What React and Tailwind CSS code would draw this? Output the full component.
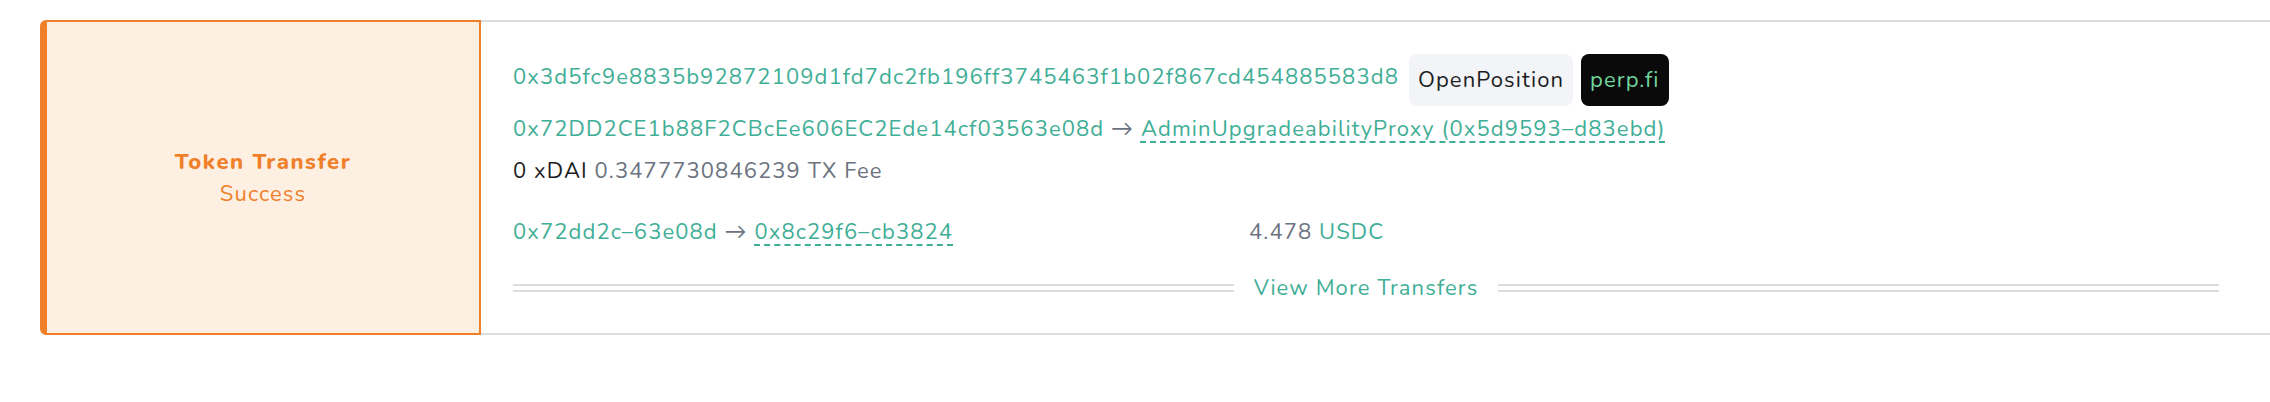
import React from 'react';

const font = { fontFamily: 'Nunito, Lato, "Open Sans", sans-serif' };

const DoubleLine = () => (
  <div className="flex-1 flex flex-col gap-[4px]">
    <div className="h-[2px] bg-[#dadde1]"></div>
    <div className="h-[2px] bg-[#dadde1]"></div>
  </div>
);

export default function App() {
  return (
    <div className="min-h-screen bg-white pt-[20px] pl-[40px] text-[22px] tracking-[0.05em]" style={font}>
      <div className="flex h-[315px]">
        {/* type + status */}
        <div className="w-[441px] shrink-0 flex flex-col items-center justify-center bg-[#fdf0e2] border-l-[7px] border-y-2 border-r-2 border-[#f07f2a] rounded-l-[6px] text-[#f07f2a] leading-[32px]">
          <span className="font-extrabold tracking-[0.07em]">Token Transfer</span>
          <span>Success</span>
        </div>

        {/* details */}
        <div className="flex-1 border-y-2 border-[#dadde1] pl-[32px] pr-[51px] pt-[32px]">
          <div className="flex items-center h-[52px]">
            <a className="text-[#3fae96] mr-[10px] mb-[5px]">0x3d5fc9e8835b92872109d1fd7dc2fb196ff3745463f1b02f867cd454885583d8</a>
            <span className="h-[52px] flex items-center px-[9px] rounded-[8px] bg-[#f3f4f8] text-[#1d1d1f] mr-[8px]">OpenPosition</span>
            <span className="h-[52px] flex items-center px-[9px] rounded-[8px] bg-[#0a0a0a] text-[#72d69d]">perp.fi</span>
          </div>

          <div className="mt-[8px] leading-[30px] text-[#3fae96]">
            0x72DD2CE1b88F2CBcEe606EC2Ede14cf03563e08d{' '}
            <span className="text-[#6b7280]">→</span>{' '}
            <a className="underline decoration-dashed decoration-[2px] underline-offset-[5px]">AdminUpgradeabilityProxy (0x5d9593–d83ebd)</a>
          </div>

          <div className="mt-[12px] leading-[30px]">
            <span className="text-[#1d1d1f]">0 xDAI</span>{' '}
            <span className="text-[#6b7280]">0.3477730846239 TX Fee</span>
          </div>

          <div className="mt-[31px] leading-[30px] flex">
            <div className="w-[736px] shrink-0 text-[#3fae96]">
              0x72dd2c–63e08d <span className="text-[#6b7280]">→</span>{' '}
              <a className="underline decoration-dashed decoration-[2px] underline-offset-[5px]">0x8c29f6–cb3824</a>
            </div>
            <div>
              <span className="text-[#6b7280]">4.478</span> <span className="text-[#3fae96]">USDC</span>
            </div>
          </div>

          <div className="mt-[26px] h-[30px] flex items-center gap-[20px]">
            <DoubleLine />
            <a className="text-[#3fae96]">View More Transfers</a>
            <DoubleLine />
          </div>
        </div>
      </div>
    </div>
  );
}
